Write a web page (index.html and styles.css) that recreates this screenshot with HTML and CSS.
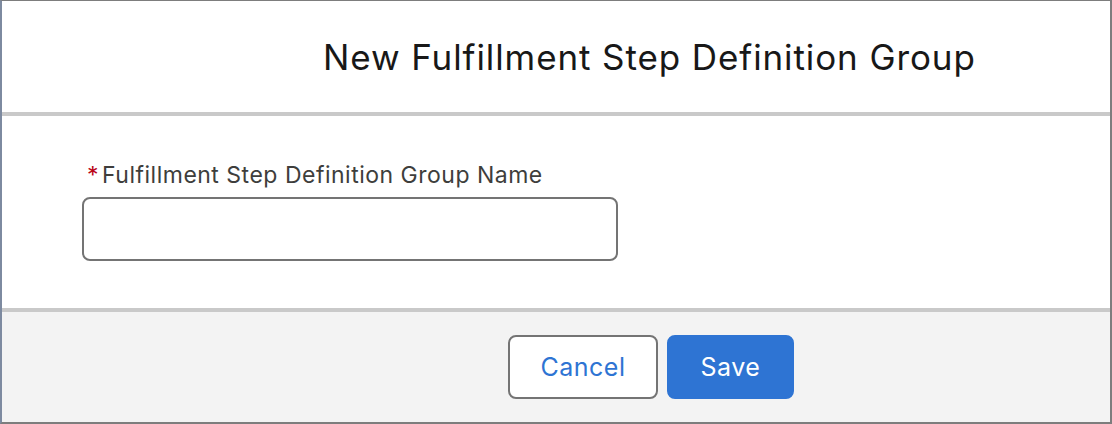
FILE: index.html
```html
<!DOCTYPE html>
<html lang="en">
<head>
    <meta charset="UTF-8">
    <meta name="viewport" content="width=device-width, initial-scale=1.0">
    <title>New Fulfillment Step Definition Group</title>
    <link rel="stylesheet" href="styles.css">
</head>
<body>
    <div class="modal">
        <div class="modal-header">
            <h1>New Fulfillment Step Definition Group</h1>
        </div>
        <div class="modal-body">
            <label for="groupName"><span class="required">*</span>Fulfillment Step Definition Group Name</label>
            <input type="text" id="groupName" name="groupName">
        </div>
        <div class="modal-footer">
            <button class="btn btn-neutral">Cancel</button>
            <button class="btn btn-brand">Save</button>
        </div>
    </div>
</body>
</html>
```

FILE: styles.css
```css
html, body {
    margin: 0;
    padding: 0;
}

body {
    font-family: Inter, "Liberation Sans", Arial, sans-serif;
    background-color: #ffffff;
}

.modal {
    width: 1112px;
    height: 424px;
    box-sizing: border-box;
    border-top: 1px solid #7d7d7d;
    border-left: 2px solid #7d8aa0;
    border-right: 2px solid #7d7d7d;
    border-bottom: 2px solid #7d7d7d;
    display: flex;
    flex-direction: column;
}

.modal-header {
    height: 115px;
    box-sizing: border-box;
    border-bottom: 4px solid #c9c9c9;
    padding-left: 321px;
    display: flex;
    align-items: center;
}

.modal-header h1 {
    margin: 0;
    font-size: 35px;
    font-weight: normal;
    letter-spacing: 0.9px;
    color: #181818;
}

.modal-body {
    height: 196px;
    box-sizing: border-box;
    border-bottom: 4px solid #c9c9c9;
    padding: 45px 80px 0;
}

.modal-body label {
    display: block;
    font-size: 23px;
    letter-spacing: 0.5px;
    color: #3e3e3c;
    margin-bottom: 8px;
}

.required {
    color: #ba0517;
    margin: 0 3px 0 5px;
}

.modal-body input {
    display: block;
    width: 536px;
    height: 64px;
    box-sizing: border-box;
    border: 2px solid #747474;
    border-radius: 8px;
    font-size: 21px;
    padding: 0 16px;
}

.modal-footer {
    flex: 1;
    background-color: #f3f3f3;
    display: flex;
    align-items: center;
    padding-left: 506px;
    gap: 9px;
}

.btn {
    height: 64px;
    box-sizing: border-box;
    border-radius: 8px;
    font-family: Inter, "Liberation Sans", Arial, sans-serif;
    font-size: 25px;
    letter-spacing: 0.5px;
    cursor: pointer;
}

.btn-neutral {
    width: 150px;
    background-color: #ffffff;
    border: 2px solid #747474;
    color: #2e74d3;
}

.btn-brand {
    width: 127px;
    background-color: #2e74d3;
    border: 2px solid #2e74d3;
    color: #ffffff;
}
```
